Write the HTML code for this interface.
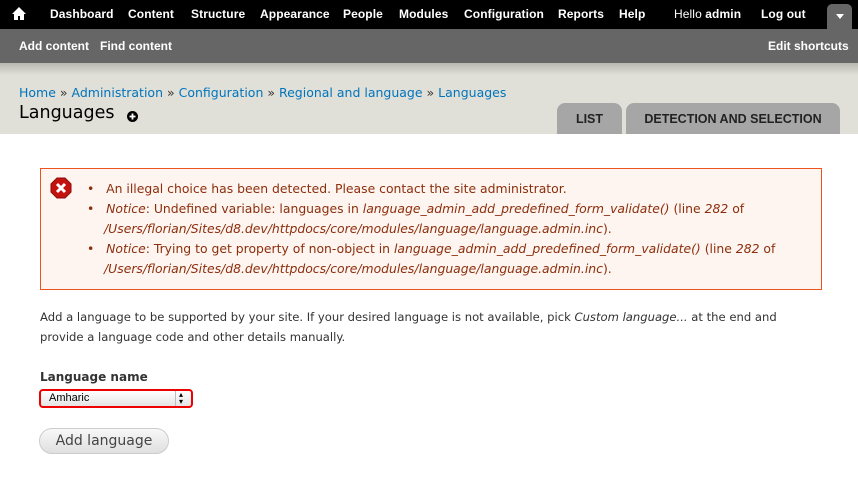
<!DOCTYPE html>
<html><head><meta charset="utf-8"><style>
*{margin:0;padding:0;box-sizing:border-box}
body{width:858px;height:482px;overflow:hidden;background:#fff;font-family:"DejaVu Sans","Liberation Sans",sans-serif;position:relative}
.a{position:absolute;white-space:nowrap}
#tb{position:absolute;left:0;top:0;width:858px;height:29px;background:#000}
#tb .a{top:7px;color:#fff;font-size:12px;font-family:"Liberation Sans",sans-serif;font-weight:bold;letter-spacing:0.1px}
#sb{position:absolute;left:0;top:29px;width:858px;height:34px;background:#666}
#sb .a{top:10px;color:#fff;font-size:12px;font-family:"Liberation Sans",sans-serif;font-weight:bold}
#hd{position:absolute;left:0;top:63px;width:858px;height:71px;background:linear-gradient(#b8b8b2 0,#e0e0d8 12px,#e0e0d8 100%)}
.bc{color:#0074bd;font-size:12.5px}
.tab{position:absolute;top:103px;height:31px;background:#a6a6a6;border-radius:8px 8px 0 0;font-family:"Liberation Sans",sans-serif;font-weight:bold;font-size:12.5px;color:#222;text-align:center;line-height:33px}
#msg{position:absolute;left:40px;top:168px;width:782px;height:122px;background:#fef5f1;border:1px solid #ed541d}
.m{color:#8c2e0b;font-size:12.4px}
.p{color:#333;font-size:11.6px}
</style></head><body>
<div id="tb">
<svg class="a" style="left:12px;top:7px" width="14" height="13" viewBox="0 0 14 13"><path d="M7 0L0 7h2v6h4V9h2v4h4V7h2z" fill="#fff"/></svg>
<span class="a" style="left:50px">Dashboard</span>
<span class="a" style="left:128px">Content</span>
<span class="a" style="left:191px">Structure</span>
<span class="a" style="left:260px">Appearance</span>
<span class="a" style="left:343px">People</span>
<span class="a" style="left:399px">Modules</span>
<span class="a" style="left:464px">Configuration</span>
<span class="a" style="left:558px">Reports</span>
<span class="a" style="left:619px">Help</span>
<span class="a" style="left:674px;font-weight:normal">Hello <b>admin</b></span>
<span class="a" style="left:761px">Log out</span>
<div class="a" style="left:827px;top:4px;width:25px;height:25px;background:#666;border-radius:5px 5px 0 0"></div>
<svg class="a" style="left:836px;top:14px" width="8" height="5"><path d="M0 0h8L4 5z" fill="#fff"/></svg>
</div>
<div id="sb">
<span class="a" style="left:19px">Add content</span>
<span class="a" style="left:100px">Find content</span>
<span class="a" style="left:768px">Edit shortcuts</span>
</div>
<div id="hd"></div>
<div class="a bc" style="left:19px;top:85px">Home <span style="color:#333">»</span> Administration <span style="color:#333">»</span> Configuration <span style="color:#333">»</span> Regional and language <span style="color:#333">»</span> Languages</div>
<div class="a" style="left:19px;top:103px;font-size:17.5px;color:#000">Languages</div>
<svg class="a" style="left:127px;top:111px" width="11" height="11"><circle cx="5.5" cy="5.5" r="5.5" fill="#000"/><path d="M5.5 2.5v6M2.5 5.5h6" stroke="#fff" stroke-width="1.8"/></svg>
<div class="tab" style="left:557px;width:65px">LIST</div>
<div class="tab" style="left:626px;width:214px">DETECTION AND SELECTION</div>
<div id="msg">
<svg class="a" style="left:9px;top:8px" width="22" height="22" viewBox="0 0 22 22"><path d="M7 1h8l6 6v8l-6 6H7l-6-6V7z" fill="#c4120e" stroke="#8a0c0a" stroke-width="1"/><path d="M7 7l8 8M15 7l-8 8" stroke="#fff" stroke-width="3"/></svg>
<div class="a m" style="left:46px;top:12px">•&nbsp;&nbsp; An illegal choice has been detected. Please contact the site administrator.</div>
<div class="a m" style="left:46px;top:32px">•&nbsp;&nbsp; <i>Notice</i>: Undefined variable: languages in <i>language_admin_add_predefined_form_validate()</i> (line <i>282</i> of</div>
<div class="a m" style="left:63px;top:52px"><i>/Users/florian/Sites/d8.dev/httpdocs/core/modules/language/language.admin.inc</i>).</div>
<div class="a m" style="left:46px;top:72px">•&nbsp;&nbsp; <i>Notice</i>: Trying to get property of non-object in <i>language_admin_add_predefined_form_validate()</i> (line <i>282</i> of</div>
<div class="a m" style="left:63px;top:92px"><i>/Users/florian/Sites/d8.dev/httpdocs/core/modules/language/language.admin.inc</i>).</div>
</div>
<div class="a p" style="left:40px;top:310px">Add a language to be supported by your site. If your desired language is not available, pick <i>Custom language...</i> at the end and</div>
<div class="a p" style="left:40px;top:330px">provide a language code and other details manually.</div>
<div class="a" style="left:40px;top:370px;font-size:12px;font-weight:bold;color:#333">Language name</div>
<div class="a" style="left:39px;top:389px;width:154px;height:19px;border:2px solid #e00;border-radius:4px;background:linear-gradient(#fff,#e4e4e4);font-family:'Liberation Sans',sans-serif;font-size:11px;color:#000;padding:1px 0 0 8px">Amharic<div class="a" style="left:134px;top:0;width:1px;height:15px;background:#bbb"></div><span class="a" style="left:138px;top:0;font-size:8px;line-height:7px">▴<br>▾</span></div>
<div class="a" style="left:39px;top:428px;width:130px;height:26px;border:1px solid #ccc;border-radius:13px;background:linear-gradient(#f8f8f8,#e0e0e0);font-size:14px;color:#444;text-align:center;line-height:25px">Add language</div>
</body></html>
